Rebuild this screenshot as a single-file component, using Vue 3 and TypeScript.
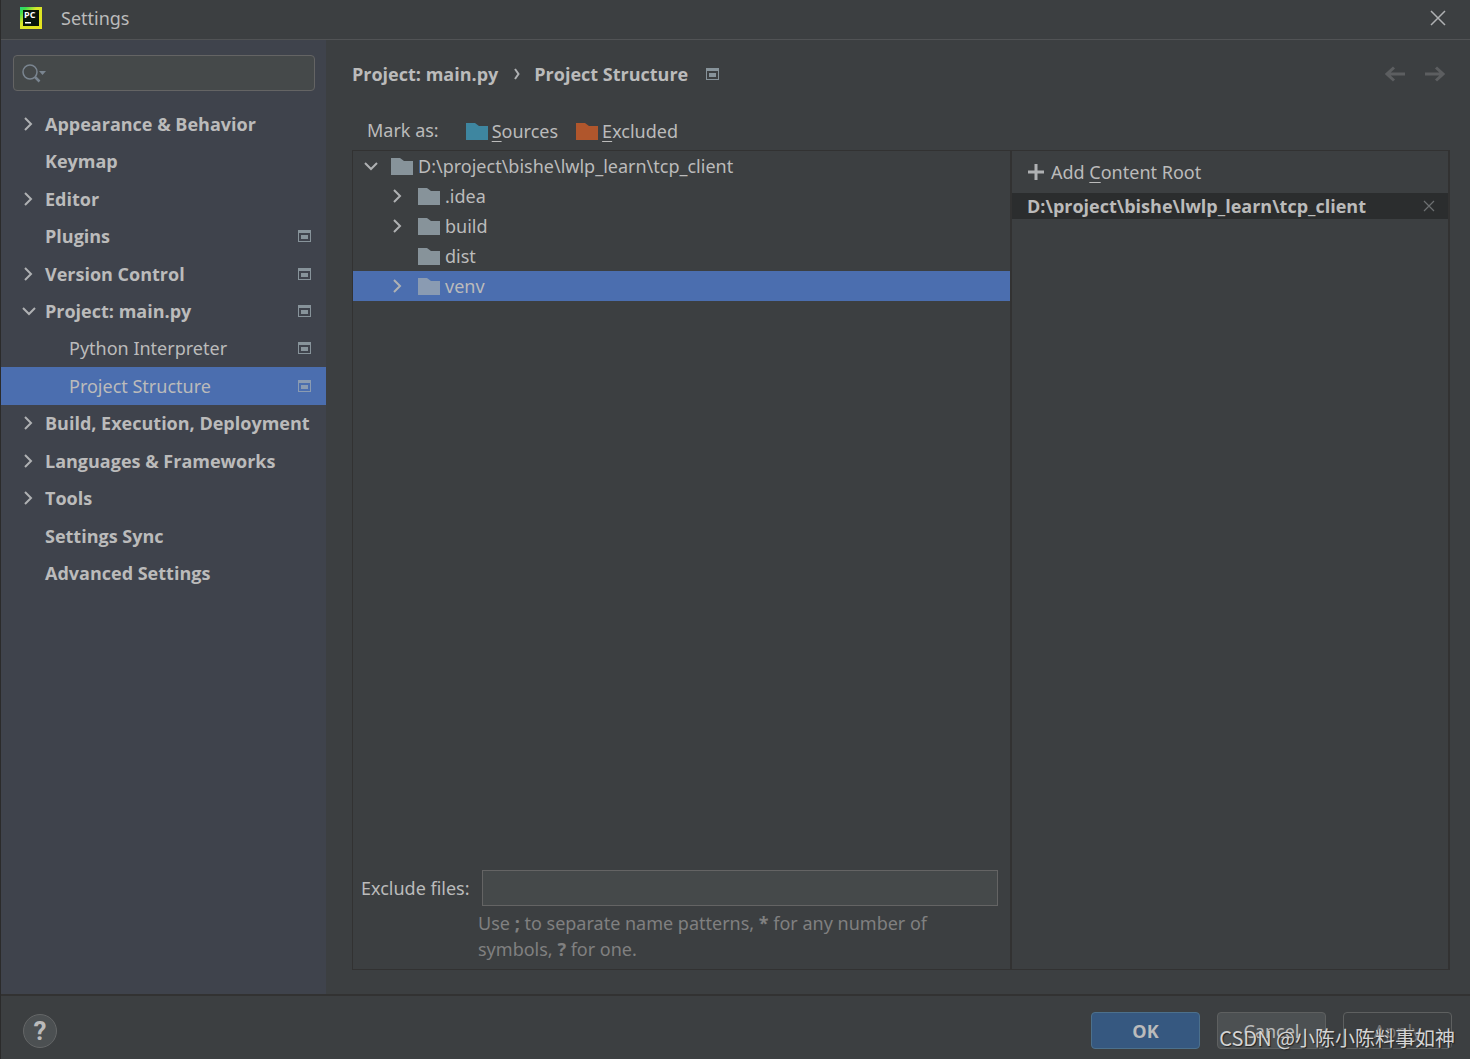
<script setup lang="ts">
import { ref } from 'vue'

interface NavItem {
  label: string
  arrow?: 'right' | 'down'
  child?: boolean
  scoped?: boolean
}

interface FolderItem {
  name: string
  arrow?: 'right' | 'down'
  root?: boolean
}

const navItems: NavItem[] = [
  { label: 'Appearance & Behavior', arrow: 'right' },
  { label: 'Keymap' },
  { label: 'Editor', arrow: 'right' },
  { label: 'Plugins', scoped: true },
  { label: 'Version Control', arrow: 'right', scoped: true },
  { label: 'Project: main.py', arrow: 'down', scoped: true },
  { label: 'Python Interpreter', child: true, scoped: true },
  { label: 'Project Structure', child: true, scoped: true },
  { label: 'Build, Execution, Deployment', arrow: 'right' },
  { label: 'Languages & Frameworks', arrow: 'right' },
  { label: 'Tools', arrow: 'right' },
  { label: 'Settings Sync' },
  { label: 'Advanced Settings' },
]

const folders: FolderItem[] = [
  { name: 'D:\\project\\bishe\\lwlp_learn\\tcp_client', arrow: 'down', root: true },
  { name: '.idea', arrow: 'right' },
  { name: 'build', arrow: 'right' },
  { name: 'dist' },
  { name: 'venv', arrow: 'right' },
]

const arrows = {
  right: 'M5 2 L11 8 L5 14',
  down: 'M3 5 L9 11 L15 5',
}

const query = ref('')
const excludePattern = ref('')
const activePage = ref('Project Structure')
const activeFolder = ref('venv')
</script>

<template>
  <div class="dialog">
    <header class="titlebar">
      <svg class="logo" viewBox="0 0 22 22" aria-hidden="true">
        <defs>
          <linearGradient id="logo-edge" x1="0" y1="0" x2="1" y2="1">
            <stop offset="0" stop-color="#21d789" />
            <stop offset="0.15" stop-color="#3fdc4c" />
            <stop offset="0.4" stop-color="#d8e62a" />
            <stop offset="1" stop-color="#e8e41c" />
          </linearGradient>
        </defs>
        <rect width="22" height="22" fill="url(#logo-edge)" />
        <rect x="3" y="3" width="16" height="16" fill="#07140b" />
        <text x="4" y="11" class="logo-text">PC</text>
        <rect x="5" y="15" width="6" height="1.500" fill="#fff" />
      </svg>
      <span class="title">Settings</span>
      <button class="icon-button close" aria-label="Close">
        <svg width="16" height="16" viewBox="0 0 16 16"><path d="M1 1 L15 15 M15 1 L1 15" class="stroke thin" /></svg>
      </button>
    </header>

    <div class="body">
      <aside class="sidebar">
        <label class="search">
          <svg width="26" height="20" viewBox="0 0 26 20" aria-hidden="true">
            <circle cx="9" cy="9" r="7" fill="none" stroke="#7a8590" stroke-width="1.5" />
            <path d="M14 14 L18.500 18.500" stroke="#7a8590" stroke-width="2.500" />
            <path d="M18 8 H25 L21.500 12 Z" fill="#7a8590" />
          </svg>
          <input v-model="query" type="text" aria-label="Search settings" />
        </label>
        <nav class="nav">
          <button
            v-for="item in navItems"
            :key="item.label"
            class="nav-item"
            :class="{ child: item.child, active: item.label === activePage }"
            @click="activePage = item.label"
          >
            <svg class="arrow" viewBox="0 0 16 16" aria-hidden="true">
              <path v-if="item.arrow" :d="arrows[item.arrow]" class="stroke" />
            </svg>
            <span class="nav-label">{{ item.label }}</span>
            <svg v-if="item.scoped" class="scope" viewBox="0 0 13 12" aria-hidden="true">
              <path fill-rule="evenodd" d="M0 0 H13 V12 H0 Z M1 3 V11 H12 V3 Z" />
              <rect x="3" y="5" width="7" height="4" />
            </svg>
          </button>
        </nav>
      </aside>

      <main class="main">
        <div class="crumbs">
          <h1>Project: main.py</h1>
          <svg class="crumb-arrow" viewBox="0 0 6 12" aria-hidden="true">
            <path d="M1 1 L4.500 6 L1 11" class="stroke" />
          </svg>
          <h1>Project Structure</h1>
          <svg class="scope" viewBox="0 0 13 12" aria-hidden="true">
            <path fill-rule="evenodd" d="M0 0 H13 V12 H0 Z M1 3 V11 H12 V3 Z" />
            <rect x="3" y="5" width="7" height="4" />
          </svg>
          <div class="history">
            <button class="icon-button" aria-label="Back" disabled>
              <svg width="20" height="16" viewBox="0 0 20 16"><path d="M20 8 H2 M9 1.500 L2 8 L9 14.500" class="stroke dim" /></svg>
            </button>
            <button class="icon-button" aria-label="Forward" disabled>
              <svg width="20" height="16" viewBox="0 0 20 16"><path d="M0 8 H18 M11 1.500 L18 8 L11 14.500" class="stroke dim" /></svg>
            </button>
          </div>
        </div>

        <div class="marks">
          <span class="mark-title">Mark as:</span>
          <button class="mark">
            <svg class="folder sources" viewBox="0 0 22 17"><path d="M0 0 H9 L13 3 H22 V17 H0 Z" /></svg>
            <span><u>S</u>ources</span>
          </button>
          <button class="mark">
            <svg class="folder excluded" viewBox="0 0 22 17"><path d="M0 0 H9 L13 3 H22 V17 H0 Z" /></svg>
            <span><u>E</u>xcluded</span>
          </button>
        </div>

        <div class="panels">
          <section class="tree-panel">
            <div class="tree">
              <button
                v-for="folder in folders"
                :key="folder.name"
                class="tree-row"
                :class="{ root: folder.root, active: folder.name === activeFolder }"
                @click="activeFolder = folder.name"
              >
                <svg class="arrow" viewBox="0 0 16 16" aria-hidden="true">
                  <path v-if="folder.arrow" :d="arrows[folder.arrow]" class="stroke" />
                </svg>
                <svg class="folder" viewBox="0 0 22 17"><path d="M0 0 H9 L13 3 H22 V17 H0 Z" /></svg>
                <span>{{ folder.name }}</span>
              </button>
            </div>
            <div class="exclude">
              <label for="exclude-files">Exclude files:</label>
              <input id="exclude-files" v-model="excludePattern" type="text" />
            </div>
            <p class="hint">Use <b>;</b> to separate name patterns, <b>*</b> for any number of symbols, <b>?</b> for one.</p>
          </section>

          <section class="roots">
            <button class="add-root">
              <svg width="16" height="16" viewBox="0 0 16 16" aria-hidden="true"><path d="M8 0 V16 M0 8 H16" class="stroke thick" /></svg>
              <span>Add <u>C</u>ontent Root</span>
            </button>
            <div class="root-row">
              <span>D:\project\bishe\lwlp_learn\tcp_client</span>
              <button class="icon-button" aria-label="Remove content root">
                <svg width="12" height="12" viewBox="0 0 12 12"><path d="M1 1 L11 11 M11 1 L1 11" stroke="#6c6f71" stroke-width="1.200" /></svg>
              </button>
            </div>
          </section>
        </div>
      </main>
    </div>

    <footer class="footer">
      <button class="help" aria-label="Help">?</button>
      <button class="action primary">OK</button>
      <button class="action">Cancel</button>
      <button class="action disabled" disabled>Apply</button>
      <span class="watermark">CSDN @小陈小陈料事如神</span>
    </footer>
  </div>
</template>

<style>
body {
  margin: 0;
  background: #3c3f41;
}
</style>

<style scoped>
* {
  box-sizing: border-box;
}

.dialog {
  display: flex;
  flex-direction: column;
  min-height: 100vh;
  border-left: 1px solid #2b2b2b;
  background: #3c3f41;
  color: #bbbbbb;
  font: 18px/26px "Noto Sans", "Open Sans", sans-serif;
}

button,
input {
  margin: 0;
  padding: 0;
  border: 0;
  background: none;
  color: inherit;
  font: inherit;
  text-align: left;
}

input {
  outline: none;
}

svg {
  display: block;
  flex: none;
}

u {
  text-underline-offset: 3px;
  text-decoration-thickness: 1px;
}

.stroke {
  fill: none;
  stroke: #afb1b3;
  stroke-width: 2;
}

.stroke.thin {
  stroke-width: 1.5;
}

.stroke.thick {
  stroke-width: 3;
}

.stroke.dim {
  stroke: #5c5e60;
  stroke-width: 3;
}

.titlebar {
  display: flex;
  align-items: center;
  height: 40px;
  padding: 0 24px 3px 19px;
  border-bottom: 1px solid #515355;
}

.logo {
  width: 22px;
  height: 22px;
}

.logo-text {
  fill: #fff;
  font: bold 9px "Open Sans", sans-serif;
}

.title {
  margin-left: 19px;
}

.close {
  margin-left: auto;
}

.body {
  display: flex;
  flex: 1;
}

.sidebar {
  flex: none;
  width: 325px;
  padding-top: 15px;
  background: #3f434c;
}

.search {
  display: flex;
  align-items: center;
  gap: 4px;
  height: 36px;
  margin: 0 11px 0 12px;
  padding-left: 7px;
  border: 1px solid #646464;
  border-radius: 4px;
  background: #45494a;
}

.search input {
  flex: 1;
  min-width: 0;
}

.nav {
  display: grid;
  grid-auto-rows: 1fr;
  height: 487px;
  margin-top: 14px;
}

.nav-item {
  display: flex;
  align-items: center;
  width: 100%;
  padding: 0 15px 0 19px;
  font-family: "Open Sans", "Noto Sans", sans-serif;
  font-weight: bold;
  white-space: nowrap;
}

.nav-item.child {
  padding-left: 43px;
  font-family: inherit;
  font-weight: normal;
}

.active {
  background: #4b6eaf;
}

.arrow {
  width: 16px;
  height: 16px;
}

.nav-label {
  flex: 1;
  margin-left: 9px;
}

.scope {
  width: 13px;
  height: 12px;
  fill: #87939a;
}

.main {
  display: flex;
  flex: 1;
  flex-direction: column;
  min-width: 0;
  padding: 20px 20px 24px 26px;
}

.crumbs {
  display: flex;
  align-items: center;
  height: 28px;
}

h1 {
  margin: 0;
  font-family: "Open Sans", "Noto Sans", sans-serif;
  font-size: 18px;
  font-weight: bold;
}

.crumb-arrow {
  width: 6px;
  height: 12px;
  margin: 0 14px 0 16px;
}

.crumbs > .scope {
  margin-left: 18px;
}

.history {
  display: flex;
  gap: 20px;
  margin-left: auto;
  padding-right: 5px;
}

.icon-button {
  display: flex;
}

.marks {
  display: flex;
  align-items: flex-start;
  gap: 18px;
  margin: 29px 0 5px;
  padding-left: 15px;
}

.mark-title {
  margin-right: 9px;
}

.mark {
  display: flex;
  align-items: center;
  gap: 4px;
  height: 28px;
}

.folder {
  width: 22px;
  height: 17px;
  fill: #87939a;
}

.active .folder,
.active .scope {
  fill: #8a9bb2;
}

.folder.sources {
  fill: #3e86a0;
}

.folder.excluded {
  fill: #b0562c;
}

.panels {
  display: flex;
  flex: 1;
  border: 1px solid #323232;
  border-right-width: 2px;
}

.tree-panel {
  display: flex;
  flex: 1;
  flex-direction: column;
  min-width: 0;
  border-right: 2px solid #323232;
}

.tree {
  flex: 1;
}

.tree-row {
  display: flex;
  align-items: center;
  width: 100%;
  height: 30px;
  padding-left: 36px;
}

.tree-row.root {
  padding-left: 9px;
}

.tree-row .folder {
  margin: 0 5px 0 13px;
}

.exclude {
  display: flex;
  align-items: center;
  gap: 12px;
  padding: 0 12px 0 8px;
}

.exclude input {
  flex: 0 1 516px;
  min-width: 0;
  height: 36px;
  margin-left: auto;
  border: 1px solid #646464;
  background: #45494a;
}

.hint {
  margin: 4px 60px 7px 125px;
  color: #808080;
}

.roots {
  flex: 0 0 436px;
}

.add-root {
  display: flex;
  align-items: center;
  gap: 7px;
  height: 42px;
  padding-left: 16px;
}

.root-row {
  display: flex;
  align-items: center;
  justify-content: space-between;
  padding: 0 13px 0 15px;
  background: #2b2d2e;
  font-family: "Open Sans", "Noto Sans", sans-serif;
  font-weight: bold;
}

.footer {
  position: relative;
  display: flex;
  align-items: center;
  gap: 18px;
  height: 65px;
  padding: 6px 18px 0 22px;
  border-top: 2px solid #323232;
}

.help {
  width: 34px;
  height: 34px;
  margin-right: auto;
  border: 1px solid #646667;
  border-radius: 50%;
  background: #4c5052;
  font-family: Roboto, sans-serif;
  font-size: 26px;
  font-weight: bold;
  text-align: center;
}

.action {
  width: 109px;
  height: 37px;
  border: 1px solid #5e6060;
  border-radius: 4px;
  background: #4c5052;
  text-align: center;
}

.action + .action {
  margin-left: -1px;
}

.action.primary {
  border-color: #4c708c;
  background: #365880;
  font-family: "Open Sans", "Noto Sans", sans-serif;
  font-weight: bold;
}

.action.disabled {
  background: none;
  color: #777777;
}

.watermark {
  position: absolute;
  right: 15px;
  bottom: 8px;
  color: #d4d4d4;
  font: 20px/26px "Noto Sans CJK SC", sans-serif;
  text-shadow: 1px 1px 1px #222222;
  white-space: nowrap;
}
</style>
